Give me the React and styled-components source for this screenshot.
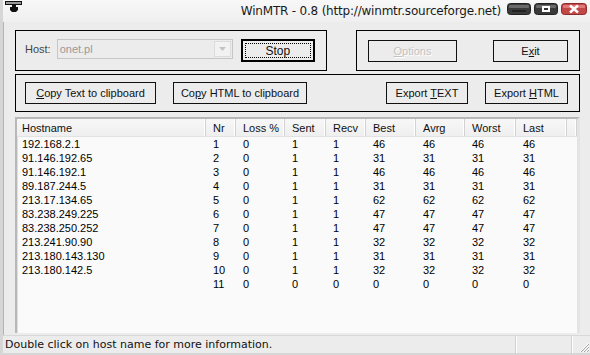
import styled, { createGlobalStyle } from 'styled-components';

const GlobalStyle = createGlobalStyle`
	html, body {
		margin: 0;
		padding: 0;
		background: #ececec;
	}
	body {
		width: 590px;
		height: 355px;
		overflow: hidden;
		font-family: "Liberation Sans", Arial, sans-serif;
		font-size: 11px;
		color: #000;
	}
`

const columns = [
	{ title: 'Hostname', width: 189, pad: 5 },
	{ title: 'Nr', width: 30 },
	{ title: 'Loss %', width: 49 },
	{ title: 'Sent', width: 41 },
	{ title: 'Recv', width: 40 },
	{ title: 'Best', width: 50 },
	{ title: 'Avrg', width: 49 },
	{ title: 'Worst', width: 51 },
	{ title: 'Last', width: 51 },
];

const hops = [
	['192.168.2.1', 1, 0, 1, 1, 46, 46, 46, 46],
	['91.146.192.65', 2, 0, 1, 1, 31, 31, 31, 31],
	['91.146.192.1', 3, 0, 1, 1, 46, 46, 46, 46],
	['89.187.244.5', 4, 0, 1, 1, 31, 31, 31, 31],
	['213.17.134.65', 5, 0, 1, 1, 62, 62, 62, 62],
	['83.238.249.225', 6, 0, 1, 1, 47, 47, 47, 47],
	['83.238.250.252', 7, 0, 1, 1, 47, 47, 47, 47],
	['213.241.90.90', 8, 0, 1, 1, 32, 32, 32, 32],
	['213.180.143.130', 9, 0, 1, 1, 31, 31, 31, 31],
	['213.180.142.5', 10, 0, 1, 1, 32, 32, 32, 32],
	['', 11, 0, 0, 0, 0, 0, 0, 0],
];

const gridCols = columns.map(c => c.width + 'px').join(' ') + ' 1fr';

const AppIcon = () => (
	<svg width="18" height="12" viewBox="0 0 18 12">
		<rect x="0.5" y="0.5" width="16" height="3" fill="#9a9a9a" stroke="#111" />
		<rect x="7" y="4" width="4" height="2" fill="#111" />
		<path d="M5 6 h8 v3 l-2 2 h-4 l-2 -2 z" fill="#111" />
	</svg>
);

const App = () => {
	return (
		<>
			<GlobalStyle />
			<Window>
				<TitleBar>
					<AppIcon />
					<Title>WinMTR - 0.8 (http://winmtr.sourceforge.net)</Title>
					<Controls>
						<Ctrl>
							<svg width="24" height="12" viewBox="0 0 24 12">
								<rect x="0.5" y="0.5" width="23" height="11" rx="3" fill="#3a3a3a" stroke="#222" />
								<rect x="2" y="2" width="20" height="3" rx="1" fill="#6a6a6a" />
								<rect x="5" y="7" width="14" height="2" fill="#222" />
							</svg>
						</Ctrl>
						<Ctrl>
							<svg width="24" height="12" viewBox="0 0 24 12">
								<rect x="0.5" y="0.5" width="23" height="11" rx="3" fill="#3a3a3a" stroke="#222" />
								<rect x="2" y="2" width="20" height="3" rx="1" fill="#6a6a6a" />
								<rect x="8" y="3" width="8" height="6" fill="#fff" />
								<rect x="10" y="5" width="4" height="2" fill="#333" />
							</svg>
						</Ctrl>
						<Ctrl>
							<svg width="26" height="12" viewBox="0 0 26 12">
								<rect x="0.5" y="0.5" width="25" height="11" rx="3" fill="#c24848" stroke="#8e2a2a" />
								<rect x="2" y="2" width="22" height="3" rx="1" fill="#e07a7a" />
								<path d="M9 2.5 L17 9.5 M17 2.5 L9 9.5" stroke="#fff" strokeWidth="2.4" />
							</svg>
						</Ctrl>
					</Controls>
				</TitleBar>

				<Body>
					<Row>
						<Group width={312}>
							<HostLabel>Host:</HostLabel>
							<Combo>
								<ComboText>onet.pl</ComboText>
								<ComboArrow>
									<svg width="7" height="4" viewBox="0 0 7 4">
										<path d="M0 0 h7 l-3.5 4 z" fill="#c4c4c4" />
									</svg>
								</ComboArrow>
							</Combo>
							<DefaultButton width={75}>Stop</DefaultButton>
						</Group>
						<Group width={226} spread>
							<Button width={89} disabled><u>O</u>ptions</Button>
							<Button width={75}>E<u>x</u>it</Button>
						</Group>
					</Row>

					<Group height={38}>
						<Button width={131}><u>C</u>opy Text to clipboard</Button>
						<Button width={134} gap={17}>Co<u>p</u>y HTML to clipboard</Button>
						<Button width={82} push>Export <u>T</u>EXT</Button>
						<Button width={83} gap={17}>Export <u>H</u>TML</Button>
					</Group>

					<List>
						<Header>
							{columns.map(c => (
								<HeadCell key={c.title} pad={c.pad}>{c.title}</HeadCell>
							))}
							<HeadCell />
						</Header>
						{hops.map(h => (
							<DataRow key={h[1]}>
								{h.map((v, i) => (
									<Cell key={i} pad={columns[i].pad}>{v}</Cell>
								))}
							</DataRow>
						))}
					</List>
				</Body>

				<StatusBar>
					<StatusMain>Double click on host name for more information.</StatusMain>
					<StatusPanel />
					<StatusGrip>
						<svg width="12" height="12" viewBox="0 0 12 12">
							<path d="M11 2 L2 11 M11 5 L5 11 M11 8 L8 11" stroke="#fff" strokeWidth="1" />
							<path d="M11 3 L3 11 M11 6 L6 11 M11 9 L9 11" stroke="#a8a8a8" strokeWidth="1" />
						</svg>
					</StatusGrip>
				</StatusBar>
			</Window>
		</>
	);
};

const Window = styled.div`
	display: flex;
	flex-direction: column;
	width: 590px;
	height: 355px;
	box-sizing: border-box;
	border-left: 3px solid #d6d6d6;
	box-shadow: inset 1px 0 #b4b4b4;
	background: #ececec;
`

const TitleBar = styled.div`
	display: flex;
	align-items: center;
	height: 22px;
	padding: 0 3px 0 2px;
	background: linear-gradient(#f8f8f8, #efefef);
	svg { display: block; }
	> svg:first-child { align-self: flex-start; margin-top: 1px; }
`

const Title = styled.div`
	margin-left: auto;
	font-family: "DejaVu Sans", Verdana, sans-serif;
	font-size: 12px;
	color: #1a1a1a;
	letter-spacing: -0.2px;
`

const Controls = styled.div`
	display: flex;
	gap: 3px;
	margin-left: 6px;
	margin-bottom: 4px;
`

const Ctrl = styled.div`
	display: flex;
`

const Body = styled.div`
	flex: 1;
	display: flex;
	flex-direction: column;
	gap: 3px;
	padding: 8px 10px 2px 12px;
	min-height: 0;
`

const Row = styled.div`
	display: flex;
	gap: 29px;
`

const Group = styled.div`
	display: flex;
	align-items: center;
	box-sizing: border-box;
	width: ${p => (p.width ? p.width + 'px' : 'auto')};
	height: ${p => p.height || 41}px;
	border: 1px solid #000;
	padding: 0 11px 0 ${p => (p.spread ? 11 : 9)}px;
	justify-content: ${p => (p.spread ? 'space-between' : 'flex-start')};
`

const HostLabel = styled.span`
	width: 32px;
	color: #444;
	font-size: 11px;
	margin-top: -3px;
`

const Combo = styled.div`
	display: flex;
	align-items: stretch;
	box-sizing: border-box;
	width: 178px;
	height: 20px;
	margin-top: -4px;
	border: 1px solid #c6c6c6;
	background: #ececec;
`

const ComboText = styled.span`
	flex: 1;
	padding: 3px 0 0 2px;
	color: #9a9a9a;
	font-size: 11px;
`

const ComboArrow = styled.span`
	display: flex;
	align-items: center;
	justify-content: center;
	width: 15px;
	margin: 1px;
	border: 1px solid #dcdcdc;
	background: #f2f2f2;
`

const Button = styled.button`
	box-sizing: border-box;
	width: ${p => p.width}px;
	height: 22px;
	margin-left: ${p => (p.push ? 'auto' : (p.gap || 0) + 'px')};
	padding: 0;
	border: 1px solid #111;
	background: #ececec;
	font-family: "Liberation Sans", Arial, sans-serif;
	font-size: 11px;
	color: #111;
	u { text-underline-offset: 1px; }
	&:disabled {
		color: #c2c2c2;
		text-shadow: 1px 1px #fff;
	}
`

const DefaultButton = styled(Button)`
	position: relative;
	height: 23px;
	margin-left: 8px;
	border: 2px solid #000;
	font-size: 12px;
	&::after {
		content: '';
		position: absolute;
		inset: 2px;
		border: 1px dotted #000;
	}
`

const List = styled.div`
	flex: 1;
	margin-top: 2px;
	box-sizing: border-box;
	border-left: 2px solid #b8b8b8;
	border-top: 2px solid #b8b8b8;
	border-right: 3px solid #e4e4e4;
	box-shadow: inset 1px 1px #dedede;
	background: #fafafa;
	overflow: hidden;
`

const Header = styled.div`
	display: grid;
	grid-template-columns: ${gridCols};
	height: 17px;
	background: linear-gradient(#f7f7f7, #efefef);
	border-bottom: 1px solid #e2e2e2;
`

const HeadCell = styled.div`
	padding: 3px 0 0 ${p => p.pad || 7}px;
	font-size: 11px;
	color: #111;
	border-right: 1px solid #d2d2d2;
	box-shadow: inset -1px 0 #fff;
`

const DataRow = styled.div`
	display: grid;
	grid-template-columns: ${gridCols};
	height: 14px;
	line-height: 14px;
`

const Cell = styled.div`
	padding-left: ${p => p.pad || 7}px;
	font-size: 11px;
	white-space: nowrap;
`

const StatusBar = styled.div`
	display: flex;
	height: 20px;
	box-sizing: border-box;
	border-top: 1px solid #d8d8d8;
	border-bottom: 2px solid #d6d6d6;
	background: #ececec;
	font-family: "DejaVu Sans", Verdana, sans-serif;
	font-size: 11px;
`

const StatusMain = styled.div`
	flex: 1;
	padding: 2px 0 0 2px;
	color: #111;
`

const StatusPanel = styled.div`
	width: 55px;
	border-left: 1px solid #d0d0d0;
	box-shadow: inset 1px 0 #fff;
`

const StatusGrip = styled.div`
	display: flex;
	align-items: flex-end;
	justify-content: flex-end;
	width: 18px;
	border-left: 1px solid #d0d0d0;
	box-shadow: inset 1px 0 #fff;
`

export default App
